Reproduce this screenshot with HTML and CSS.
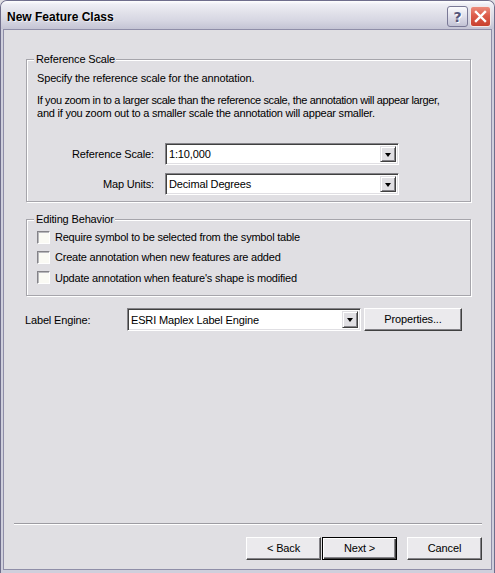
FILE: index.html
```html
<!DOCTYPE html>
<html>
<head>
<meta charset="utf-8">
<link rel="stylesheet" href="styles.css">
</head>
<body>
<div class="window">
  <div class="titlebar">
    <span class="title">New Feature Class</span>
    <div class="tb-buttons">
      <div class="tb-btn tb-help">?</div>
      <div class="tb-btn tb-close">
        <svg width="13" height="13" viewBox="0 0 13 13"><path d="M2 2 L11 11 M11 2 L2 11" stroke="#fff" stroke-width="2.4" stroke-linecap="square"/></svg>
      </div>
    </div>
  </div>
  <div class="client">
    <div class="group group-ref">
      <span class="legend">Reference Scale</span>
      <p class="line">Specify the reference scale for the annotation.</p>
      <p class="para"><span class="para-l1">If you zoom in to a larger scale than the reference scale, the annotation will appear larger,</span><br><span class="para-l2">and if you zoom out to a smaller scale the annotation will appear smaller.</span></p>
      <div class="field-row first">
        <span class="field-label">Reference Scale:</span>
        <div class="combo"><span class="combo-text">1:10,000</span><span class="drop"><span class="arrow"></span></span></div>
      </div>
      <div class="field-row">
        <span class="field-label">Map Units:</span>
        <div class="combo"><span class="combo-text">Decimal Degrees</span><span class="drop"><span class="arrow"></span></span></div>
      </div>
    </div>

    <div class="group group-edit">
      <span class="legend">Editing Behavior</span>
      <div class="check-row"><span class="checkbox"></span><span>Require symbol to be selected from the symbol table</span></div>
      <div class="check-row"><span class="checkbox"></span><span>Create annotation when new features are added</span></div>
      <div class="check-row"><span class="checkbox"></span><span>Update annotation when feature's shape is modified</span></div>
    </div>

    <div class="engine-row">
      <span class="engine-label">Label Engine:</span>
      <div class="combo combo-engine"><span class="combo-text">ESRI Maplex Label Engine</span><span class="drop"><span class="arrow"></span></span></div>
      <div class="button btn-props">Properties...</div>
    </div>

    <div class="spacer"></div>
    <div class="separator"></div>

    <div class="nav-row">
      <div class="button">&lt; Back</div>
      <div class="button default">Next &gt;</div>
      <div class="button cancel">Cancel</div>
    </div>
  </div>
</div>
</body>
</html>
```

FILE: styles.css
```css
html, body {
  margin: 0;
  padding: 0;
  background: #e0dfe3;
}

body {
  font-family: "Liberation Sans", Arial, sans-serif;
  font-size: 11px;
  letter-spacing: -0.15px;
  color: #000;
}

.window {
  width: 495px;
  height: 573px;
  box-sizing: border-box;
  border: 1px solid #6f6e8c;
  border-bottom: none;
  border-radius: 7px 7px 0 0;
  background: #cfcfdc;
  display: flex;
  flex-direction: column;
  overflow: hidden;
}

.titlebar {
  height: 28px;
  flex: none;
  display: flex;
  align-items: center;
  justify-content: space-between;
  background: linear-gradient(to bottom, #ffffff 0%, #eeeef4 12%, #e2e2ea 40%, #d6d6e2 70%, #c4c4d4 100%);
  padding: 0 3px 0 6px;
}

.title {
  font-size: 12px;
  font-weight: bold;
  letter-spacing: 0;
  color: #000;
  text-shadow: 1px 1px 0 rgba(255,255,255,0.6);
  margin-top: 3px;
}

.tb-buttons {
  display: flex;
  gap: 2px;
  margin-top: 3px;
}

.tb-btn {
  width: 21px;
  height: 21px;
  box-sizing: border-box;
  border-radius: 3px;
  display: flex;
  align-items: center;
  justify-content: center;
}

.tb-help {
  border: 1px solid #7a7996;
  background: linear-gradient(to bottom, #fbfbfd 0%, #dcdce8 55%, #c2c2d4 100%);
  color: #55557a;
  font-family: "DejaVu Sans", sans-serif;
  font-weight: bold;
  font-size: 14px;
  letter-spacing: 0;
  text-shadow: 1px 1px 0 #fff;
}

.tb-close {
  border: 1px solid #f2e8e8;
  background: linear-gradient(to bottom, #ec8c7c 0%, #dd5c4a 45%, #c8402e 100%);
}

.client {
  flex: 1;
  margin: 0 2px 3px 2px;
  border: 1px solid #8f8ea8;
  background: #e0dfe3;
  display: flex;
  flex-direction: column;
}

p {
  margin: 0;
}

.group {
  position: relative;
  margin-left: 22px;
  width: 445px;
  box-sizing: border-box;
  border: 1px solid #a6a5ab;
  box-shadow: 1px 1px 0 #fff, inset 1px 1px 0 #fff;
}

.legend {
  position: absolute;
  top: -7px;
  left: 7px;
  padding: 0 1px 0 2px;
  background: #e0dfe3;
  line-height: 13px;
}

.group-ref {
  margin-top: 29px;
  height: 143px;
  padding: 12px 0 0 10px;
}

.line {
  line-height: 13px;
}

.para {
  margin-top: 9px;
  line-height: 13px;
}

.para-l1 {
  letter-spacing: -0.36px;
}

.para-l2 {
  letter-spacing: -0.22px;
}

.field-row {
  display: flex;
  align-items: center;
  margin-top: 8px;
}

.field-row.first {
  margin-top: 23px;
}

.field-label {
  width: 117px;
  text-align: right;
  margin-right: 11px;
}

.combo {
  width: 234px;
  height: 22px;
  box-sizing: border-box;
  background: #fff;
  border-top: 1px solid #848388;
  border-left: 1px solid #848388;
  border-right: 1px solid #fff;
  border-bottom: 1px solid #fff;
  box-shadow: inset 1px 1px 0 #404040, inset -1px -1px 0 #e0dfe3;
  display: flex;
  align-items: center;
  justify-content: space-between;
  padding: 2px 2px 2px 3px;
}

.combo-text {
  white-space: nowrap;
}

.drop {
  width: 16px;
  height: 16px;
  box-sizing: border-box;
  background: #e0dfe3;
  border-top: 1px solid #e0dfe3;
  border-left: 1px solid #e0dfe3;
  border-right: 1px solid #404040;
  border-bottom: 1px solid #404040;
  box-shadow: inset 1px 1px 0 #fff, inset -1px -1px 0 #848388;
  display: flex;
  align-items: center;
  justify-content: center;
}

.arrow {
  width: 0;
  height: 0;
  border-left: 3.5px solid transparent;
  border-right: 3.5px solid transparent;
  border-top: 4px solid #000;
  margin-top: 1px;
}

.group-edit {
  margin-top: 17px;
  height: 77px;
  padding: 7px 0 0 10px;
}

.check-row {
  height: 20px;
  display: flex;
  align-items: center;
  letter-spacing: -0.22px;
}

.check-row:nth-child(4) {
  height: 21px;
}

.checkbox {
  width: 13px;
  height: 13px;
  box-sizing: border-box;
  margin-right: 5px;
  background: #fafaf4;
  border-top: 1px solid #848388;
  border-left: 1px solid #848388;
  border-right: 1px solid #fff;
  border-bottom: 1px solid #fff;
  box-shadow: inset 1px 1px 0 #b8b8bc;
}

.engine-row {
  display: flex;
  align-items: center;
  margin-top: 12px;
  margin-left: 21px;
  height: 23px;
}

.engine-label {
  width: 102px;
}

.combo-engine {
  height: 23px;
  width: 234px;
  margin-right: 3px;
}

.combo-engine .drop {
  height: 17px;
}

.button {
  width: 75px;
  height: 23px;
  box-sizing: border-box;
  background: #ebeaed;
  border-top: 1px solid #fff;
  border-left: 1px solid #fff;
  border-right: 1px solid #404040;
  border-bottom: 1px solid #404040;
  box-shadow: inset -1px -1px 0 #848388;
  display: flex;
  align-items: center;
  justify-content: center;
  padding-bottom: 1px;
}

.btn-props {
  width: 98px;
}

.spacer {
  flex: 1;
}

.separator {
  margin-left: 10px;
  width: 468px;
  height: 1px;
  background: #9d9ca2;
  border-bottom: 1px solid #fff;
}

.nav-row {
  display: flex;
  justify-content: flex-end;
  margin-top: 12px;
  margin-right: 9px;
  margin-bottom: 9px;
}

.button.default {
  margin-left: 1px;
  border: 1px solid #000;
  box-shadow: inset 1px 1px 0 #fff, inset -1px -1px 0 #404040, inset -2px -2px 0 #848388;
}

.button.cancel {
  margin-left: 10px;
}
```
